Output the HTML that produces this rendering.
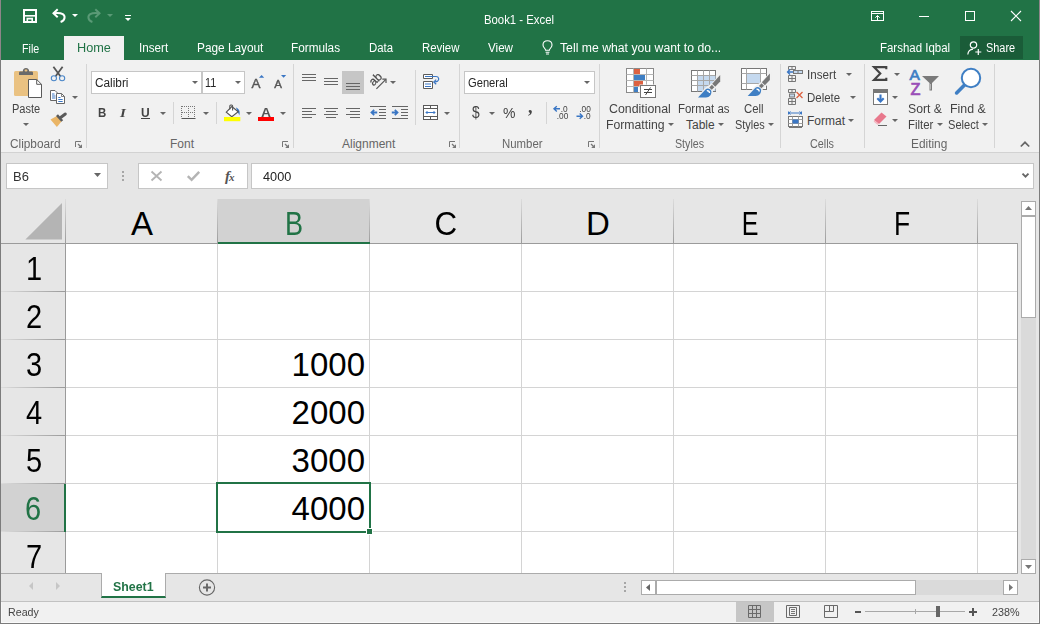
<!DOCTYPE html>
<html lang="en">
<head>
<meta charset="utf-8">
<title>Book1 - Excel</title>
<style>
*{box-sizing:border-box;margin:0;padding:0}
html,body{width:1040px;height:624px;overflow:hidden;background:#e6e6e6}
body{position:relative;font-family:"Liberation Sans",sans-serif;font-size:12px;color:#444;}
.abs{position:absolute}
.t{position:absolute;white-space:nowrap;line-height:14px;height:14px;transform-origin:0 50%}
.w{color:#fff}
svg{position:absolute;overflow:visible}
#titlebar{left:0;top:0;width:1040px;height:60px;background:#217346}
#ribbon{left:0;top:60px;width:1040px;height:92px;background:#f1f1f1}
#ribline{left:0;top:152px;width:1040px;height:1px;background:#d2d2d2}
.sep{position:absolute;top:64px;width:1px;height:84px;background:#d5d5d5}
.ssep{position:absolute;top:105px;width:1px;height:20px;background:#d5d5d5}
.box{position:absolute;background:#fff;border:1px solid #c6c6c6}
.lbl{color:#666}
.dd{position:absolute;width:0;height:0;border-left:3px solid transparent;border-right:3px solid transparent;border-top:3px solid #666}
/* grid */
#grid{left:1px;top:199px;width:1017px;height:374px;background:#fff;overflow:hidden}
.ch{position:absolute;top:0;height:45px;width:152px;overflow:hidden;background:#e6e6e6;border-bottom:1px solid #9b9b9b;font-size:33px;line-height:49px;text-align:center;color:#000}
.ch::after{content:"";position:absolute;right:0;top:0;width:1px;height:45px;background:linear-gradient(#dcdcdc,#9b9b9b)}
.rh::after{content:"";position:absolute;left:0;bottom:0;height:1px;width:64px;background:linear-gradient(90deg,#dcdcdc,#9b9b9b)}
.rh{position:absolute;left:0;width:65px;height:48px;overflow:hidden;background:#e6e6e6;border-right:1px solid #9b9b9b;font-size:33px;line-height:49px;text-align:center;color:#000}
.vl{position:absolute;top:45px;width:1px;height:330px;background:#d4d4d4}
.hl{position:absolute;left:65px;height:1px;width:952px;background:#d4d4d4}
.cv{position:absolute;font-size:33px;line-height:49px;height:48px;overflow:hidden;color:#000;text-align:right;width:146px;left:218px}
</style>
</head>
<body>
<!-- ===== TITLE BAR + TABS ===== -->
<div class="abs" id="titlebar"></div>
<!-- QAT icons -->
<svg style="left:22px;top:9px" width="16" height="14" viewBox="0 0 16 14" fill="none" stroke="#fff" stroke-width="2">
  <path d="M2 1H14V13H2Z"/><path d="M2 6.800H14" stroke-width="1.600"/><path d="M5.300 13V9.600H10.200V13" stroke-width="1.600"/>
</svg>
<svg style="left:51px;top:8px" width="16" height="15" viewBox="0 0 16 15" fill="none" stroke="#fff" stroke-width="2" stroke-linecap="butt">
  <path d="M6.700 1.300L2.500 5.200L6.700 9.200"/><path d="M2.600 5.200C6 4.800 9.500 4.800 11.800 6.200C14.600 8 14.200 12.500 9.600 14"/>
</svg>
<div class="dd" style="left:72px;top:14px;border-top-color:#fff"></div>
<svg style="left:86px;top:8px" width="16" height="15" viewBox="0 0 16 15" fill="none" stroke="#5a9a76" stroke-width="2">
  <path d="M9.300 1.300L13.500 5.200L9.300 9.200"/><path d="M13.400 5.200C10 4.800 6.500 4.800 4.200 6.200C1.400 8 1.800 12.500 6.400 14"/>
</svg>
<div class="dd" style="left:107px;top:14px;border-top-color:#5a9a76"></div>
<div class="abs" style="left:125px;top:15px;width:6px;height:1px;background:#fff"></div>
<div class="dd" style="left:125px;top:18px;border-top-color:#fff"></div>
<div class="t w" style="left:484px;top:13px;transform:scaleX(.945)">Book1 - Excel</div>
<!-- window controls -->
<svg style="left:871px;top:11px" width="13" height="10" viewBox="0 0 13 10" fill="none" stroke="#fff" stroke-width="1">
  <rect x="0.500" y="0.500" width="12" height="9"/><path d="M0.500 2.500H12.500"/><path d="M6.500 9.500V4.600M4.300 6.700L6.500 4.500L8.700 6.700"/>
</svg>
<div class="abs" style="left:919px;top:16px;width:10px;height:1px;background:#fff"></div>
<div class="abs" style="left:965px;top:11px;width:10px;height:10px;border:1px solid #fff"></div>
<svg style="left:1011px;top:11px" width="10" height="10" viewBox="0 0 10 10" stroke="#fff" stroke-width="1.1"><path d="M0 0L10 10M10 0L0 10"/></svg>
<!-- tabs -->
<div class="abs" style="left:64px;top:36px;width:60px;height:24px;background:#f1f1f1"></div>
<div class="t w" style="left:22px;top:42px;transform:scaleX(.89)">File</div>
<div class="t" style="left:77px;top:41px;color:#217346;transform:scaleX(1.06)">Home</div>
<div class="t w" style="left:139px;top:41px;transform:scaleX(.97)">Insert</div>
<div class="t w" style="left:197px;top:41px;transform:scaleX(.985)">Page Layout</div>
<div class="t w" style="left:291px;top:41px;transform:scaleX(.98)">Formulas</div>
<div class="t w" style="left:369px;top:41px;transform:scaleX(.95)">Data</div>
<div class="t w" style="left:422px;top:41px;transform:scaleX(.95)">Review</div>
<div class="t w" style="left:488px;top:41px;transform:scaleX(.97)">View</div>
<svg style="left:542px;top:40px" width="11" height="15" viewBox="0 0 11 15" fill="none" stroke="#fff" stroke-width="1.1">
  <path d="M3.6 10.2C3.6 8.6 1 7.6 1 4.9C1 2.4 3 0.7 5.5 0.7C8 0.7 10 2.4 10 4.9C10 7.6 7.4 8.6 7.4 10.2Z"/><path d="M3.6 12.2H7.4M4 14H7"/>
</svg>
<div class="t w" style="left:560px;top:41px;transform:scaleX(1.02)">Tell me what you want to do...</div>
<div class="t w" style="left:880px;top:41px;transform:scaleX(.955)">Farshad Iqbal</div>
<div class="abs" style="left:960px;top:36px;width:63px;height:23px;background:#1a5c38"></div>
<svg style="left:967px;top:41px" width="15" height="14" viewBox="0 0 15 14" fill="none" stroke="#fff" stroke-width="1.2">
  <circle cx="6.5" cy="4" r="3.2"/><path d="M0.8 13.5C1.2 10 3.4 8.4 6 8.2"/><path d="M11.300 8V14M8.300 11H14.300"/>
</svg>
<div class="t w" style="left:986px;top:41px;transform:scaleX(.91)">Share</div>
<div class="abs" id="ribbon"></div>
<!-- group separators -->
<div class="sep" style="left:86px"></div><div class="sep" style="left:293px"></div><div class="sep" style="left:459px"></div><div class="sep" style="left:599px"></div><div class="sep" style="left:780px"></div><div class="sep" style="left:864px"></div><div class="sep" style="left:994px"></div>
<!-- ===== Clipboard ===== -->
<svg style="left:13px;top:67px" width="30" height="32" viewBox="0 0 30 32">
  <rect x="1" y="4" width="24" height="25" rx="1.500" fill="#eac282"/>
  <path d="M6 8V5.800Q6 4.600 7.200 4.600H9.800C9.800 2.400 11 1 13 1C15 1 16.200 2.400 16.200 4.600H18.800Q20 4.600 20 5.800V8Z" fill="#6a6a6a"/>
  <rect x="11.600" y="2.600" width="2.800" height="2" rx="0.800" fill="#eac282"/>
  <path d="M15.500 12.500H23.700L28.500 17.300V30.500H15.500Z" fill="#fff" stroke="#5a5a5a" stroke-width="1"/>
  <path d="M23.700 12.500V17.300H28.500" fill="none" stroke="#5a5a5a" stroke-width="1"/>
</svg>
<div class="t" style="left:12px;top:102px;transform:scaleX(.92)">Paste</div>
<div class="dd" style="left:23px;top:123px"></div>
<!-- cut -->
<svg style="left:50px;top:66px" width="16" height="16" viewBox="0 0 16 16" fill="none">
  <path d="M3.400 0.800L10.400 10.200M12.600 0.800L5.600 10.200" stroke="#555" stroke-width="1.800"/>
  <ellipse cx="3.900" cy="12.200" rx="2.600" ry="2.500" stroke="#4a86c8" stroke-width="1.100"/>
  <ellipse cx="12.100" cy="12.200" rx="2.600" ry="2.500" stroke="#4a86c8" stroke-width="1.100"/>
</svg>
<!-- copy -->
<svg style="left:49px;top:89px" width="17" height="16" viewBox="0 0 17 16" fill="none" stroke="#666" stroke-width="1">
  <path d="M1.500 1.500H6L8.500 4V11.500H1.500Z" fill="#fff"/>
  <path d="M3 5H5.500M3 7H6.500M3 9H6.500" stroke="#3a76c4"/>
  <path d="M7.500 4.500H12.500L15.500 7.500V14.500H7.500Z" fill="#fff"/>
  <path d="M12.500 4.500V7.500H15.500" stroke-width="0.800"/>
  <path d="M9.300 8.500H11.500M9.300 10.500H13.700M9.300 12.500H13.700" stroke="#3a76c4"/>
</svg>
<div class="dd" style="left:72px;top:96px"></div>
<!-- format painter -->
<svg style="left:49px;top:111px" width="18" height="17" viewBox="0 0 18 17">
  <path d="M1.500 8.500L7.900 4.900L12.400 10.500L7.900 15.900Z" fill="#eab566"/>
  <path d="M8 4.200L13.200 10" stroke="#5a5a5a" stroke-width="2.600" fill="none"/>
  <path d="M12 6.200L16.300 3" stroke="#5a5a5a" stroke-width="3" stroke-linecap="round" fill="none"/>
</svg>
<div class="t lbl" style="left:10px;top:137px;transform:scaleX(.985)">Clipboard</div>
<svg class="lnch" style="left:75px;top:141px" width="7" height="7" viewBox="0 0 7 7"><path d="M0.500 6V0.500H6" fill="none" stroke="#777"/><path d="M7 3.200V7H3.200Z" fill="#777"/><path d="M3 3L5.500 5.500" stroke="#777" stroke-width="1.200"/></svg>
<!-- ===== Font ===== -->
<div class="box" style="left:91px;top:71px;width:111px;height:23px"></div>
<div class="box" style="left:202px;top:71px;width:43px;height:23px"></div>
<div class="t" style="left:95px;top:76px;color:#262626;transform:scaleX(.985)">Calibri</div>
<div class="dd" style="left:192px;top:81px"></div>
<div class="t" style="left:205px;top:76px;color:#262626;transform:scaleX(.9)">11</div>
<div class="dd" style="left:235px;top:81px"></div>
<svg style="left:250px;top:74px" width="16" height="16" viewBox="0 0 16 16"><text x="1.400" y="14" font-family="Liberation Sans, sans-serif" font-size="13.500" fill="#555" stroke="#555" stroke-width="0.400" style="filter:grayscale(1)">A</text><path d="M9 3.700H14.200L11.600 1Z" fill="#3a76c4"/></svg>
<svg style="left:273px;top:74px" width="16" height="16" viewBox="0 0 16 16"><text x="1.200" y="14" font-family="Liberation Sans, sans-serif" font-size="11.500" fill="#555" stroke="#555" stroke-width="0.400" style="filter:grayscale(1)">A</text><path d="M8 1H13.200L10.600 3.800Z" fill="#3a76c4"/></svg>
<div class="t" style="left:98px;top:106px;font-weight:bold;font-size:13px;transform:scaleX(.88);filter:grayscale(1)">B</div>
<div class="t" style="left:120px;top:106px;font-family:'Liberation Serif',serif;font-style:italic;font-weight:bold;font-size:13px;transform:scaleX(1.15);filter:grayscale(1)">I</div>
<div class="t" style="left:141px;top:106px;font-weight:bold;font-size:12px;filter:grayscale(1)">U</div>
<div class="abs" style="left:141px;top:118px;width:9px;height:1px;background:#444"></div>
<div class="dd" style="left:160px;top:112px"></div>
<div class="ssep" style="left:173px;top:102px;height:22px"></div>
<svg style="left:181px;top:106px" width="15" height="14" viewBox="0 0 15 14" fill="none" stroke="#777" stroke-width="1">
  <path d="M1 0.5H14M1 6.5H14M0.5 0V12M7.5 0V12M13.5 0V12" stroke-dasharray="1 1"/>
  <path d="M0.5 12.5H14.5" stroke="#555"/>
</svg>
<div class="dd" style="left:203px;top:112px"></div>
<div class="ssep" style="left:216px;top:102px;height:22px"></div>
<!-- fill color -->
<svg style="left:224px;top:104px" width="17" height="18" viewBox="0 0 17 18" fill="none">
  <path d="M12 3.400C15 4.600 16.600 7.500 15.200 11.600C14.800 9.800 14.300 8.800 13.600 8.300Z" fill="#3a76c4"/>
  <path d="M2.300 8.200L7.800 2.600L14.200 7.800L7.800 12.700Z" fill="#fff" stroke="#555" stroke-width="1.100"/>
  <path d="M5.800 5.500V2Q5.800 1 6.800 1H7.600Q8.600 1 8.600 2V6.500" stroke="#555" stroke-width="1.100"/>
  <rect x="0" y="13" width="16.300" height="4.200" fill="#ffff00"/>
</svg>
<div class="dd" style="left:246px;top:112px"></div>
<!-- font color -->
<div class="t" style="left:261px;top:105px;font-size:13.500px;font-weight:bold;color:#555;line-height:16px;height:16px;transform:scaleX(1.03);filter:grayscale(1)">A</div>
<div class="abs" style="left:258px;top:117px;width:16px;height:4px;background:#ff0000"></div>
<div class="dd" style="left:280px;top:112px"></div>
<div class="t lbl" style="left:170px;top:137px;transform:scaleX(1.0)">Font</div>
<svg class="lnch" style="left:282px;top:141px" width="7" height="7" viewBox="0 0 7 7"><path d="M0.500 6V0.500H6" fill="none" stroke="#777"/><path d="M7 3.200V7H3.200Z" fill="#777"/><path d="M3 3L5.500 5.500" stroke="#777" stroke-width="1.200"/></svg>
<div class="abs" id="ribline"></div>

<!-- ===== Alignment ===== -->
<div class="abs" style="left:302px;top:74px;width:14px;height:1px;background:#666"></div><div class="abs" style="left:302px;top:77px;width:14px;height:1px;background:#666"></div><div class="abs" style="left:302px;top:80px;width:14px;height:1px;background:#666"></div>
<div class="abs" style="left:324px;top:78px;width:14px;height:1px;background:#666"></div><div class="abs" style="left:324px;top:81px;width:14px;height:1px;background:#666"></div><div class="abs" style="left:324px;top:84px;width:14px;height:1px;background:#666"></div>
<div class="abs" style="left:342px;top:71px;width:22px;height:23px;background:#c6c6c6"></div>
<div class="abs" style="left:346px;top:83px;width:14px;height:1px;background:#666"></div><div class="abs" style="left:346px;top:86px;width:14px;height:1px;background:#666"></div><div class="abs" style="left:346px;top:89px;width:14px;height:1px;background:#666"></div>
<svg style="left:369px;top:72px" width="18" height="18" viewBox="0 0 18 18" fill="none">
  <text x="0" y="0" transform="translate(4.600 14.600) rotate(-45)" font-family="Liberation Sans, sans-serif" font-size="12" fill="#4a4a4a" stroke="#4a4a4a" stroke-width="0.250" style="filter:grayscale(1)">ab</text>
  <path d="M7.400 16.800L16.600 7.600" stroke="#555" stroke-width="1.200"/><path d="M13.300 7.200H17V10.900" stroke="#555" stroke-width="1.200"/>
</svg>
<div class="dd" style="left:390px;top:81px"></div>
<div class="ssep" style="left:415px;top:70px;height:55px"></div>
<!-- wrap text -->
<svg style="left:423px;top:74px" width="17" height="15" viewBox="0 0 17 15" fill="none" stroke="#5a5a5a" stroke-width="1">
  <path d="M0.500 0.500H9.500V4.500H0.500Z" fill="#fff"/><path d="M0.500 7.500H9.500V14.500H0.500Z" fill="#fff"/>
  <path d="M2 2.500H13" stroke="#3a76c4"/><path d="M2 10H8M2 12.500H8" stroke="#3a76c4"/>
  <path d="M13 2.500C16 2.500 16.500 6 14.500 7.300C13.800 7.800 12.500 7.900 11.500 7.900" stroke="#3a76c4" stroke-width="1.200"/><path d="M13.200 5.600L10.800 7.900L13.200 10.200" stroke="#3a76c4" stroke-width="1.200"/>
</svg>
<div class="abs" style="left:302px;top:108px;width:14px;height:1px;background:#666"></div><div class="abs" style="left:302px;top:111px;width:10px;height:1px;background:#666"></div><div class="abs" style="left:302px;top:114px;width:14px;height:1px;background:#666"></div><div class="abs" style="left:302px;top:117px;width:10px;height:1px;background:#666"></div>
<div class="abs" style="left:324px;top:108px;width:14px;height:1px;background:#666"></div><div class="abs" style="left:326px;top:111px;width:10px;height:1px;background:#666"></div><div class="abs" style="left:324px;top:114px;width:14px;height:1px;background:#666"></div><div class="abs" style="left:326px;top:117px;width:10px;height:1px;background:#666"></div>
<div class="abs" style="left:346px;top:108px;width:14px;height:1px;background:#666"></div><div class="abs" style="left:350px;top:111px;width:10px;height:1px;background:#666"></div><div class="abs" style="left:346px;top:114px;width:14px;height:1px;background:#666"></div><div class="abs" style="left:350px;top:117px;width:10px;height:1px;background:#666"></div>
<div class="abs" style="left:370px;top:106px;width:16px;height:1px;background:#666"></div><div class="abs" style="left:370px;top:118px;width:16px;height:1px;background:#666"></div><div class="abs" style="left:379px;top:109px;width:7px;height:1px;background:#666"></div><div class="abs" style="left:379px;top:112px;width:7px;height:1px;background:#666"></div><div class="abs" style="left:379px;top:115px;width:7px;height:1px;background:#666"></div>
<svg style="left:370px;top:108px" width="9" height="9" viewBox="0 0 9 9"><path d="M0.200 4.500L3.600 1.200L4.800 2.400L3.700 3.500H7.200V5.500H3.700L4.800 6.600L3.600 7.800Z" fill="#3a76c4"/></svg>
<div class="abs" style="left:392px;top:106px;width:16px;height:1px;background:#666"></div><div class="abs" style="left:392px;top:118px;width:16px;height:1px;background:#666"></div><div class="abs" style="left:401px;top:109px;width:7px;height:1px;background:#666"></div><div class="abs" style="left:401px;top:112px;width:7px;height:1px;background:#666"></div><div class="abs" style="left:401px;top:115px;width:7px;height:1px;background:#666"></div>
<svg style="left:391px;top:108px" width="9" height="9" viewBox="0 0 9 9"><path d="M7.800 4.500L4.400 1.200L3.200 2.400L4.300 3.500H0.800V5.500H4.300L3.200 6.600L4.400 7.800Z" fill="#3a76c4"/></svg>
<!-- merge -->
<svg style="left:423px;top:105px" width="16" height="15" viewBox="0 0 16 15" fill="none" stroke="#5a5a5a" stroke-width="1">
  <rect x="0.5" y="0.5" width="14" height="14" fill="#fff"/><path d="M0.5 3.5H14.5M0.5 11.5H14.5M7.5 0.5V3.5M7.5 11.5V14.5"/>
  <path d="M3 7.5H12" stroke="#3a76c4"/><path d="M4.5 6L3 7.5L4.5 9M10.5 6L12 7.5L10.5 9" stroke="#3a76c4"/>
</svg>
<div class="dd" style="left:444px;top:112px"></div>
<div class="t lbl" style="left:342px;top:137px;transform:scaleX(1.0)">Alignment</div>
<svg class="lnch" style="left:449px;top:141px" width="7" height="7" viewBox="0 0 7 7"><path d="M0.500 6V0.500H6" fill="none" stroke="#777"/><path d="M7 3.200V7H3.200Z" fill="#777"/><path d="M3 3L5.500 5.500" stroke="#777" stroke-width="1.200"/></svg>
<!-- ===== Number ===== -->
<div class="box" style="left:464px;top:71px;width:131px;height:23px"></div>
<div class="t" style="left:468px;top:76px;color:#262626;transform:scaleX(.93)">General</div>
<div class="dd" style="left:584px;top:81px"></div>
<div class="t" style="left:472px;top:103px;font-size:16px;line-height:20px;height:20px;transform:scaleX(.86);filter:grayscale(1)">$</div>
<div class="dd" style="left:489px;top:112px"></div>
<div class="t" style="left:503px;top:104px;font-size:14px;line-height:18px;height:18px;transform:scaleX(1.0);filter:grayscale(1)">%</div>
<div class="t" style="left:528px;top:97px;font-size:18px;line-height:20px;height:20px;font-family:'Liberation Serif',serif;font-weight:bold;filter:grayscale(1)">,</div>
<div class="ssep" style="left:546px;top:102px;height:22px"></div>
<svg style="left:553px;top:105px" width="16" height="15" viewBox="0 0 16 15" fill="#444" font-family="Liberation Sans, sans-serif" font-size="8.300">
  <path d="M1 3.800H7M3.800 1.200L1 3.800L3.800 6.400" fill="none" stroke="#3a76c4" stroke-width="1.400"/>
  <g style="filter:grayscale(1)"><text x="7.800" y="6.800">.0</text><text x="3.800" y="14">.00</text></g>
</svg>
<svg style="left:576px;top:105px" width="16" height="15" viewBox="0 0 16 15" fill="#444" font-family="Liberation Sans, sans-serif" font-size="8.300">
  <g style="filter:grayscale(1)"><text x="3.300" y="6.800">.00</text><text x="7.800" y="14">.0</text></g>
  <path d="M0.500 11.200H6.500M3.700 8.600L6.500 11.200L3.700 13.800" fill="none" stroke="#3a76c4" stroke-width="1.400"/>
</svg>
<div class="t lbl" style="left:502px;top:137px;transform:scaleX(.95)">Number</div>
<svg class="lnch" style="left:588px;top:141px" width="7" height="7" viewBox="0 0 7 7"><path d="M0.500 6V0.500H6" fill="none" stroke="#777"/><path d="M7 3.200V7H3.200Z" fill="#777"/><path d="M3 3L5.500 5.500" stroke="#777" stroke-width="1.200"/></svg>
<!-- ===== Styles ===== -->
<svg style="left:626px;top:68px" width="31" height="30" viewBox="0 0 31 30" fill="none">
  <rect x="0.5" y="0.5" width="27" height="24" fill="#fff" stroke="#8a8a8a"/>
  <path d="M0.5 6.5H27.5M0.5 12.5H27.5M0.5 18.5H27.5M7.5 0.5V24.5M20.500 0.5V24.5" stroke="#b5b5b5"/>
  <rect x="8" y="1" width="6" height="5" fill="#dc6141"/><rect x="8" y="7" width="11" height="5" fill="#3f7fc4"/>
  <rect x="8" y="13" width="9" height="5" fill="#dc6141"/><rect x="8" y="19" width="4" height="5" fill="#3f7fc4"/>
  <rect x="13.500" y="16.500" width="17" height="14" fill="#f1f1f1"/><rect x="14.5" y="17.5" width="15" height="12" fill="#fff" stroke="#777"/>
  <path d="M18 21.500H26M18 24.500H26M24.500 19.500L19.500 27" stroke="#444" stroke-width="1"/>
</svg>
<div class="t" style="left:609px;top:102px;transform:scaleX(1.03)">Conditional</div>
<div class="t" style="left:606px;top:118px;transform:scaleX(1.02)">Formatting</div>
<div class="dd" style="left:668px;top:123px"></div>
<svg style="left:691px;top:70px" width="32" height="28" viewBox="0 0 32 28" fill="none">
  <rect x="0.500" y="0.500" width="24" height="21" fill="#fff" stroke="#777"/>
  <rect x="7" y="6" width="17.500" height="15" fill="#c5d9ef"/>
  <path d="M0.500 5.500H24.500M0.500 10.500H24.500M0.500 15.500H24.500M6.500 0.500V21.500M12.500 0.500V21.500M18.500 0.500V21.500" stroke="#a6a6a6"/>
  <g transform="translate(7 27.400)"><path d="M-2 1L7 -9.500L14 -14.500L22.500 -24H23.700V-15.500L17.500 -9L15 -6.500C15 -2 12 1 8 1Z" fill="#f1f1f1"/><path d="M0 0L7.500 -8C9.500 -9.700 12.600 -8.800 13.300 -6.500C14 -3.500 11.500 0 8 0Z" fill="#3f7fc4"/><path d="M8.800 -6.600C10.200 -7 11.500 -6 11.500 -4.400" fill="none" stroke="#fff" stroke-width="1.400"/><path d="M11.300 -10L13.900 -12.600L16.300 -10.200L13.700 -7.600Z" fill="#777"/><path d="M22.200 -22.400V-15.800L17.200 -10.600L14.200 -13.600Z" fill="#777"/></g>
</svg>
<div class="t" style="left:678px;top:102px;transform:scaleX(.955)">Format as</div>
<div class="t" style="left:686px;top:118px;transform:scaleX(1.0)">Table</div>
<div class="dd" style="left:718px;top:123px"></div>
<svg style="left:741px;top:68px" width="32" height="29" viewBox="0 0 32 29" fill="none">
  <rect x="0.500" y="0.500" width="25" height="21" fill="#fff" stroke="#777"/>
  <path d="M0.500 5.500H25.500M0.500 15.500H25.500M5.500 0.500V21.500M19.500 0.500V21.500" stroke="#a6a6a6"/>
  <rect x="6" y="6" width="13" height="9" fill="#c5d9ef"/>
  <g transform="translate(6.700 27.900)"><path d="M-2 1L7 -9.500L14 -14.500L22.500 -24H23.700V-15.500L17.500 -9L15 -6.500C15 -2 12 1 8 1Z" fill="#f1f1f1"/><path d="M0 0L7.500 -8C9.500 -9.700 12.600 -8.800 13.300 -6.500C14 -3.500 11.500 0 8 0Z" fill="#3f7fc4"/><path d="M8.800 -6.600C10.200 -7 11.500 -6 11.500 -4.400" fill="none" stroke="#fff" stroke-width="1.400"/><path d="M11.300 -10L13.900 -12.600L16.300 -10.200L13.700 -7.600Z" fill="#777"/><path d="M22.200 -22.400V-15.800L17.200 -10.600L14.200 -13.600Z" fill="#777"/></g>
</svg>
<div class="t" style="left:744px;top:102px;transform:scaleX(.95)">Cell</div>
<div class="t" style="left:735px;top:118px;transform:scaleX(.91)">Styles</div>
<div class="dd" style="left:768px;top:123px"></div>
<div class="t lbl" style="left:675px;top:137px;transform:scaleX(.89)">Styles</div>
<!-- ===== Cells ===== -->
<svg style="left:787px;top:66px" width="17" height="16" viewBox="0 0 17 16" fill="none" stroke="#777">
  <path d="M1.5 0.5H8.5V3.500H1.5ZM5 0.5V3.5"/><path d="M1.5 9.500H8.5V15.5H1.5ZM1.5 12.5H8.5M5 9.5V15.5"/>
  <rect x="6.5" y="4.500" width="9" height="3" fill="#c5d9ef" stroke="#777"/><path d="M11 4.5V7.5"/>
  <path d="M0.5 6H6M3 3.500L0.500 6L3 8.500" stroke="#3a76c4" stroke-width="1.300"/>
</svg>
<div class="t" style="left:807px;top:68px;transform:scaleX(.97)">Insert</div>
<div class="dd" style="left:846px;top:73px"></div>
<svg style="left:787px;top:89px" width="17" height="16" viewBox="0 0 17 16" fill="none" stroke="#777">
  <path d="M1.5 0.5H8.5V3.500H1.5ZM5 0.5V3.5"/><path d="M1.5 9.500H8.5V15.5H1.5ZM1.5 12.5H8.5M5 9.5V15.5"/>
  <rect x="2.5" y="5" width="5" height="3" fill="#c5d9ef" stroke="#777"/>
  <path d="M9.5 3L15.500 9M15.500 3L9.500 9" stroke="#dc6141" stroke-width="1.300"/>
</svg>
<div class="t" style="left:807px;top:91px;transform:scaleX(.955)">Delete</div>
<div class="dd" style="left:850px;top:96px"></div>
<svg style="left:788px;top:111px" width="16" height="17" viewBox="0 0 16 17" fill="none" stroke="#777">
  <path d="M0.5 2H13.500M0.500 0.500V3.500M13.500 0.500V3.500" stroke="#3a76c4"/><path d="M2.500 0.500L0.800 2L2.500 3.500M11.500 0.500L13.200 2L11.500 3.500" stroke="#3a76c4"/>
  <rect x="0.5" y="5.5" width="14" height="10" fill="#fff"/><path d="M0.5 8.500H14.5M0.5 12.500H14.5M4.500 5.500V15.5M10.500 5.500V15.5" stroke="#a0a0a0"/>
  <rect x="4.500" y="8.500" width="6" height="4" fill="#3a76c4" stroke="none"/>
  <path d="M1 16.500H14" stroke="#777"/>
</svg>
<div class="t" style="left:807px;top:114px;transform:scaleX(1.0)">Format</div>
<div class="dd" style="left:848px;top:119px"></div>
<div class="t lbl" style="left:810px;top:137px;transform:scaleX(.9)">Cells</div>
<!-- ===== Editing ===== -->
<svg style="left:872px;top:66px" width="16" height="15" viewBox="0 0 16 15" fill="none" stroke="#444" stroke-width="2.100"><path d="M14.300 3.300V1.100H2L8.300 7.500L2 13.900H14.300V11.700" stroke-linejoin="miter"/></svg>
<div class="dd" style="left:894px;top:73px"></div>
<svg style="left:873px;top:89px" width="15" height="16" viewBox="0 0 15 16" fill="none">
  <rect x="0.5" y="0.5" width="14" height="15" fill="#fff" stroke="#777"/><rect x="0" y="0" width="15" height="4" fill="#777"/>
  <path d="M7.500 5.500V12.500M4.300 9.300L7.500 12.500L10.700 9.300" stroke="#3a76c4" stroke-width="2.100"/>
</svg>
<div class="dd" style="left:892px;top:96px"></div>
<svg style="left:873px;top:112px" width="15" height="14" viewBox="0 0 15 14" fill="none">
  <path d="M8.500 0.500L13.500 4.500L6 12L1 8Z" fill="#e8788c"/><path d="M1 8L6 12L4.500 12.800L0.800 9.700Z" fill="#f4b6c0"/>
  <path d="M5 13.500H14" stroke="#666"/>
</svg>
<div class="dd" style="left:892px;top:119px"></div>
<svg style="left:909px;top:68px" width="31" height="28" viewBox="0 0 31 28" fill="none">
  <text x="0.400" y="12.400" font-family="Liberation Sans, sans-serif" font-size="15.500" fill="#3f7fc4" stroke="#3f7fc4" stroke-width="0.700">A</text>
  <text x="1.600" y="27" font-family="Liberation Sans, sans-serif" font-size="16.500" fill="#9b4fb8" stroke="#9b4fb8" stroke-width="0.700" textLength="10" lengthAdjust="spacingAndGlyphs">Z</text>
  <path d="M13 8H30L23 15V22.500H20.500V15Z" fill="#7a7a7a"/><path d="M21.500 16V21.500H22V16Z" fill="#f1f1f1"/>
</svg>
<div class="t" style="left:908px;top:102px;transform:scaleX(1.02)">Sort &amp;</div>
<div class="t" style="left:908px;top:118px;transform:scaleX(.95)">Filter</div>
<div class="dd" style="left:937px;top:123px"></div>
<svg style="left:953px;top:67px" width="30" height="30" viewBox="0 0 30 30" fill="none">
  <path d="M12 17.500L3.600 25.900" stroke="#3f7fc4" stroke-width="3.600" stroke-linecap="round"/>
  <circle cx="18" cy="11" r="9.200" fill="#fff" stroke="#3f7fc4" stroke-width="2"/>
</svg>
<div class="t" style="left:950px;top:102px;transform:scaleX(1.03)">Find &amp;</div>
<div class="t" style="left:948px;top:118px;transform:scaleX(.925)">Select</div>
<div class="dd" style="left:982px;top:123px"></div>
<div class="t lbl" style="left:911px;top:137px;transform:scaleX(.99)">Editing</div>
<svg style="left:1020px;top:141px" width="10" height="6" viewBox="0 0 10 6" fill="none" stroke="#666" stroke-width="1.700"><path d="M0.800 5.500L5 1.300L9.200 5.500"/></svg>
<!-- ===== Formula bar ===== -->
<div class="box" style="left:6px;top:163px;width:102px;height:26px;border-color:#c6c6c6"></div>
<div class="t" style="left:13px;top:170px;color:#333;transform:scaleX(1.08)">B6</div>
<svg style="left:94px;top:173px" width="7" height="4" viewBox="0 0 7 4"><path d="M0 0H7L3.500 4Z" fill="#666"/></svg>
<div class="abs" style="left:122px;top:171px;width:2px;height:2px;background:#a6a6a6;box-shadow:0 4px 0 #a6a6a6,0 8px 0 #a6a6a6"></div>
<div class="box" style="left:138px;top:163px;width:110px;height:26px;border-color:#c6c6c6"></div>
<svg style="left:151px;top:171px" width="11" height="10" viewBox="0 0 11 10" stroke="#b4b4b4" stroke-width="1.900"><path d="M0.500 0.500L10.500 9.500M10.500 0.500L0.500 9.500"/></svg>
<svg style="left:187px;top:171px" width="13" height="10" viewBox="0 0 13 10" fill="none" stroke="#b4b4b4" stroke-width="2.500"><path d="M0.800 5.200L4.600 8.800L12.200 0.800"/></svg>
<div class="t" style="left:225px;top:167px;font-family:'Liberation Serif',serif;font-style:italic;font-weight:bold;font-size:15px;line-height:18px;height:18px;color:#555;letter-spacing:-1px">f<span style="font-size:11px">x</span></div>
<div class="box" style="left:251px;top:163px;width:783px;height:26px;border-color:#c6c6c6"></div>
<div class="t" style="left:263px;top:170px;color:#222;transform:scaleX(1.06)">4000</div>
<svg style="left:1022px;top:173px" width="7" height="5" viewBox="0 0 7 5" fill="none" stroke="#666" stroke-width="1.900"><path d="M0.500 0.700L3.500 3.700L6.500 0.700"/></svg>
<!-- ===== GRID ===== -->
<div class="abs" id="grid">
<div class="abs" style="left:0;top:0;width:65px;height:45px;background:#e6e6e6;border-bottom:1px solid #9b9b9b"></div><div class="abs" style="left:64px;top:0;width:1px;height:45px;background:linear-gradient(#dcdcdc,#9b9b9b)"></div>
<svg style="left:24px;top:4px" width="37" height="37" viewBox="0 0 37 37"><path d="M37 0V36.600H0.400Z" fill="#b4b4b4"/></svg>
<div class="ch" style="left:65px">A</div><div class="ch" style="left:217px;background:#d2d2d2;color:#217346;border-bottom:2px solid #217346"><span style="display:inline-block;transform:scaleX(0.82)">B</span></div><div class="ch" style="left:369px"><span style="display:inline-block;transform:scaleX(0.95)">C</span></div><div class="ch" style="left:521px">D</div><div class="ch" style="left:673px"><span style="display:inline-block;transform:scaleX(0.76)">E</span></div><div class="ch" style="left:825px"><span style="display:inline-block;transform:scaleX(0.8)">F</span></div><div class="abs" style="left:977px;top:0;width:41px;height:45px;background:#e6e6e6;border-bottom:1px solid #9b9b9b"></div>
<div class="rh" style="top:45px"><span style="display:inline-block;transform:scaleX(.88);margin-left:2px">1</span></div><div class="rh" style="top:93px"><span style="display:inline-block;transform:scaleX(.88);margin-left:2px">2</span></div><div class="rh" style="top:141px"><span style="display:inline-block;transform:scaleX(.88);margin-left:2px">3</span></div><div class="rh" style="top:189px"><span style="display:inline-block;transform:scaleX(.88);margin-left:2px">4</span></div><div class="rh" style="top:237px"><span style="display:inline-block;transform:scaleX(.88);margin-left:2px">5</span></div><div class="rh" style="top:285px;background:#d2d2d2;color:#217346;border-right:2px solid #217346"><span style="display:inline-block;transform:scaleX(.88);margin-left:2px">6</span></div><div class="rh" style="top:333px"><span style="display:inline-block;transform:scaleX(.88);margin-left:2px">7</span></div>
<div class="vl" style="left:216px"></div><div class="vl" style="left:368px"></div><div class="vl" style="left:520px"></div><div class="vl" style="left:672px"></div><div class="vl" style="left:824px"></div><div class="vl" style="left:976px"></div>
<div class="hl" style="top:92px"></div><div class="hl" style="top:140px"></div><div class="hl" style="top:188px"></div><div class="hl" style="top:236px"></div><div class="hl" style="top:284px"></div><div class="hl" style="top:332px"></div><div class="hl" style="top:380px"></div>
<div class="cv" style="top:141px">1000</div><div class="cv" style="top:189px">2000</div><div class="cv" style="top:237px">3000</div><div class="cv" style="top:285px">4000</div>
<div class="abs" style="left:215px;top:283px;width:155px;height:51px;border:2px solid #217346"></div>
<div class="abs" style="left:365px;top:329px;width:7px;height:7px;background:#217346;border:1px solid #fff"></div>
<div class="abs" style="left:1016px;top:44px;width:1px;height:330px;background:#a0a0a0"></div>
</div>
<div class="abs" style="left:1018px;top:199px;width:21px;height:375px;background:#e6e6e6"></div>
<div class="abs" style="left:1px;top:573px;width:1017px;height:1px;background:#ababab"></div>
<!-- vertical scrollbar -->
<div class="abs" style="left:1021px;top:216px;width:15px;height:343px;background:#dadada"></div>
<div class="box" style="left:1021px;top:201px;width:15px;height:15px;border-color:#ababab"></div>
<svg style="left:1025px;top:206px" width="7" height="4" viewBox="0 0 7 4"><path d="M0 4H7L3.500 0Z" fill="#777"/></svg>
<div class="box" style="left:1021px;top:216px;width:15px;height:102px;border-color:#ababab"></div>
<div class="box" style="left:1021px;top:559px;width:15px;height:15px;border-color:#ababab"></div>
<svg style="left:1025px;top:565px" width="7" height="4" viewBox="0 0 7 4"><path d="M0 0H7L3.500 4Z" fill="#777"/></svg>
<!-- ===== sheet tab bar ===== -->
<div class="abs" style="left:29px;top:582px;width:0;height:0;border-top:4px solid transparent;border-bottom:4px solid transparent;border-right:4px solid #c6c6c6"></div>
<div class="abs" style="left:56px;top:582px;width:0;height:0;border-top:4px solid transparent;border-bottom:4px solid transparent;border-left:4px solid #c6c6c6"></div>
<div class="abs" style="left:101px;top:573px;width:65px;height:25px;background:#fff;border-bottom:2px solid #217346;border-left:1px solid #ababab;border-right:1px solid #ababab"></div>
<div class="t" style="left:113px;top:580px;color:#217346;font-weight:bold;transform:scaleX(1.03)">Sheet1</div>
<svg style="left:198px;top:579px" width="18" height="18" viewBox="0 0 18 18" fill="none" stroke="#666"><circle cx="9" cy="8.500" r="7.600" stroke-width="1.100"/><path d="M9 4.500V12.500M5 8.500H13" stroke-width="1.900"/></svg>
<div class="abs" style="left:624px;top:582px;width:2px;height:2px;background:#a6a6a6;box-shadow:0 4px 0 #a6a6a6,0 8px 0 #a6a6a6"></div>
<div class="abs" style="left:656px;top:580px;width:347px;height:15px;background:#dadada"></div>
<div class="box" style="left:641px;top:580px;width:15px;height:15px;border-color:#ababab"></div>
<svg style="left:646px;top:584px" width="4" height="7" viewBox="0 0 4 7"><path d="M4 0V7L0 3.500Z" fill="#666"/></svg>
<div class="box" style="left:656px;top:580px;width:260px;height:15px;border-color:#ababab"></div>
<div class="box" style="left:1003px;top:580px;width:15px;height:15px;border-color:#ababab"></div>
<svg style="left:1009px;top:584px" width="4" height="7" viewBox="0 0 4 7"><path d="M0 0V7L4 3.500Z" fill="#777"/></svg>
<!-- ===== status bar ===== -->
<div class="abs" style="left:0;top:601px;width:1040px;height:1px;background:#c2c2c2"></div>
<div class="abs" style="left:0;top:602px;width:1040px;height:22px;background:#f1f1f1"></div>
<div class="t" style="left:8px;top:605px;font-size:11px;color:#444;transform:scaleX(.97)">Ready</div>
<div class="abs" style="left:736px;top:602px;width:38px;height:21px;background:#c6c6c6"></div>
<svg style="left:748px;top:605px" width="13" height="13" viewBox="0 0 13 13" fill="none" stroke="#6a6a6a"><path d="M0.500 0.500H12.500V12.500H0.500ZM0.500 4.500H12.500M0.500 8.500H12.500M4.500 0.500V12.500M8.500 0.500V12.500"/></svg>
<svg style="left:786px;top:605px" width="14" height="13" viewBox="0 0 14 13" fill="none" stroke="#6a6a6a"><path d="M0.500 0.500H13.500V12.500H0.500Z"/><path d="M3.500 2.500H10.500V10.500H3.500Z"/><path d="M5 4.500H9M5 6.500H9M5 8.500H9" stroke-width="0.900"/></svg>
<svg style="left:824px;top:605px" width="14" height="13" viewBox="0 0 14 13" fill="none" stroke="#6a6a6a"><path d="M0.500 0.500H13.500V12.500H0.500Z"/><path d="M5.500 0.500V6.500M9.500 0.500V6.500M0.500 6.500H9.500"/></svg>
<div class="abs" style="left:855px;top:611px;width:6px;height:2px;background:#555"></div>
<div class="abs" style="left:865px;top:611px;width:100px;height:1px;background:#a8a8a8"></div>
<div class="abs" style="left:915px;top:609px;width:1px;height:5px;background:#a8a8a8"></div>
<div class="abs" style="left:936px;top:606px;width:4px;height:11px;background:#666"></div>
<div class="abs" style="left:969px;top:611px;width:8px;height:2px;background:#555"></div><div class="abs" style="left:972px;top:608px;width:2px;height:8px;background:#555"></div>
<div class="t" style="left:992px;top:605px;font-size:11px;color:#444;transform:scaleX(.98)">238%</div>
<!-- window edges -->
<div class="abs" style="left:1px;top:622px;width:1038px;height:1px;background:#fafafa"></div>
<div class="abs" style="left:1038px;top:602px;width:1px;height:21px;background:#fafafa"></div>
<div class="abs" style="left:1px;top:602px;width:1px;height:21px;background:#f8f8f8"></div>
<div class="abs" style="left:0;top:0;width:1px;height:624px;background:#7c7c7c"></div>
<div class="abs" style="left:1039px;top:0;width:1px;height:624px;background:#7c7c7c"></div>
<div class="abs" style="left:0;top:0;width:1px;height:60px;background:#8e8589"></div>
<div class="abs" style="left:1039px;top:0;width:1px;height:60px;background:#8e8589"></div>
<div class="abs" style="left:0;top:623px;width:1040px;height:1px;background:#7c7c7c"></div>
</body>
</html>
